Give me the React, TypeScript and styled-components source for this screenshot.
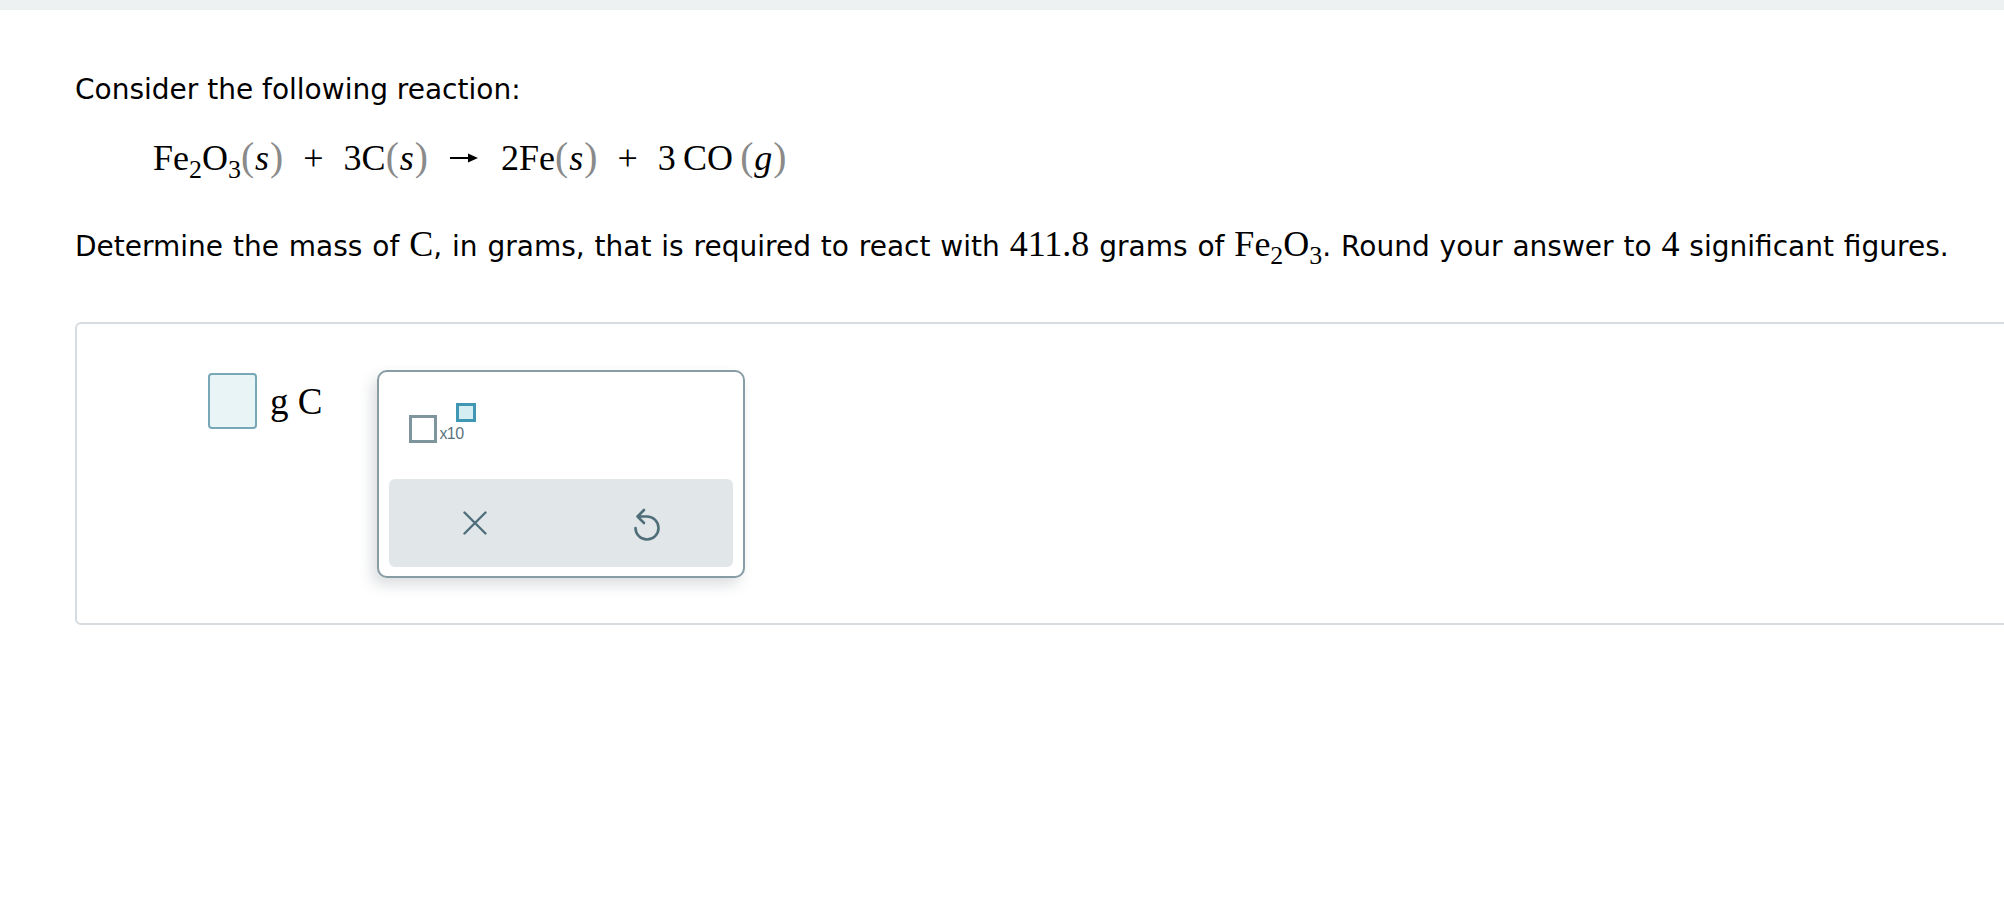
import React from "react";
import styled, { createGlobalStyle } from "styled-components";

const GlobalStyle = createGlobalStyle`
  html, body {
    margin: 0;
    padding: 0;
    background: #fff;
    overflow-x: hidden;
  }
  body {
    font-family: "DejaVu Sans", Verdana, sans-serif;
    color: #000;
  }
`;

const TopBar = styled.div`
  height: 10px;
  background: #eef1f2;
`;

const Page = styled.div`
  padding: 60px 0 0 75px;
`;

const Prompt = styled.p`
  margin: 0;
  font-size: 28px;
  line-height: 40px;
`;

const Equation = styled.div`
  margin: 22px 0 0 78px;
  font-family: "Liberation Serif", "Times New Roman", serif;
  font-size: 36px;
  line-height: 50px;
  height: 50px;
  display: flex;
  align-items: baseline;
`;

const Question = styled.p`
  margin: 45px 0 0;
  font-size: 28px;
  line-height: 40px;
  height: 40px;
  word-spacing: 1px;
  white-space: nowrap;
`;

const M = styled.span`
  font-family: "Liberation Serif", "Times New Roman", serif;
  font-size: 36px;
  line-height: 0;
  word-spacing: 0;
`;

const Sub = styled.sub`
  font-size: 0.72em;
  line-height: 0;
  vertical-align: -0.32em;
`;

const Paren = styled.span`
  color: #8a8a8a;
  font-size: 1.1em;
`;

const State = styled.i`
  font-style: italic;
  padding: 0 1px;
`;

const Op = styled.span`
  margin: 0 20px;
`;

const Arrow = styled.svg`
  margin: 0 22px 0 22px;
  align-self: center;
  position: relative;
  top: 1px;
`;

const AnswerPanel = styled.div`
  box-sizing: border-box;
  margin: 55px -60px 0 0;
  height: 303px;
  border: 2px solid #d5dbde;
  border-radius: 6px;
  display: flex;
  align-items: flex-start;
  padding: 46px 0 0 131px;
`;

const InputGroup = styled.div`
  display: flex;
  align-items: flex-start;
  padding-top: 3px;
`;

const AnswerInput = styled.div`
  width: 45px;
  height: 52px;
  border: 2px solid #78a7b7;
  border-radius: 4px;
  background: #e9f4f7;
`;

const Unit = styled.span`
  font-family: "Liberation Serif", "Times New Roman", serif;
  font-size: 37px;
  line-height: 40px;
  margin: 9px 0 0 13px;
`;

const Palette = styled.div`
  box-sizing: border-box;
  margin-left: 55px;
  width: 368px;
  height: 208px;
  border: 2px solid #879ca5;
  border-radius: 10px;
  background: #fff;
  box-shadow: -5px 7px 14px rgba(40, 60, 70, 0.17);
  padding: 0 10px 9px;
  display: flex;
  flex-direction: column;
`;

const TemplateRow = styled.div`
  height: 107px;
  flex: none;
  display: flex;
  align-items: flex-start;
  padding: 31px 0 0 20px;
  box-sizing: border-box;
`;

const BaseBox = styled.span`
  width: 22px;
  height: 22px;
  margin-top: 12px;
  border: 3px solid #7f959e;
`;

const TimesTen = styled.span`
  font-family: "Liberation Sans", Arial, sans-serif;
  font-size: 16px;
  letter-spacing: -0.6px;
  line-height: 16px;
  color: #5b7480;
  margin: 23px 0 0 2px;
`;

const ExpBox = styled.span`
  width: 14px;
  height: 13px;
  margin-left: -7px;
  border: 3px solid #3f97b3;
  background: #d5eef4;
`;

const ButtonBar = styled.div`
  flex: 1;
  display: grid;
  grid-template-columns: 1fr 1fr;
  background: #e1e6e9;
  border-radius: 6px;
`;

const IconButton = styled.div`
  display: flex;
  align-items: center;
  justify-content: center;
`;

const iconColor = "#4f6e7a";

const Phase = ({ s }: { s: string }) => (
  <>
    <Paren>(</Paren>
    <State>{s}</State>
    <Paren>)</Paren>
  </>
);

const App: React.FC = () => {
  return (
    <>
      <GlobalStyle />
      <TopBar />
      <Page>
        <Prompt>Consider the following reaction:</Prompt>
        <Equation>
          <span>
            Fe<Sub>2</Sub>O<Sub>3</Sub>
          </span>
          <Phase s="s" />
          <Op>+</Op>
          <span>3C</span>
          <Phase s="s" />
          <Arrow width="29" height="12" viewBox="0 0 29 12">
            <line x1="0" y1="6" x2="21" y2="6" stroke="#000" strokeWidth="2" />
            <path d="M18 1.5 L28 6 L18 10.5 Z" fill="#000" />
          </Arrow>
          <span>2Fe</span>
          <Phase s="s" />
          <Op>+</Op>
          <span>3&thinsp;CO&thinsp;</span>
          <Phase s="g" />
        </Equation>
        <Question>
          Determine the mass of <M>C</M>, in grams, that is required to react
          with <M>411.8</M> grams of{" "}
          <M>
            Fe<Sub>2</Sub>O<Sub>3</Sub>
          </M>
          . Round your answer to <M>4</M> significant figures.
        </Question>
        <AnswerPanel>
          <InputGroup>
            <AnswerInput />
            <Unit>g C</Unit>
          </InputGroup>
          <Palette>
            <TemplateRow>
              <BaseBox />
              <TimesTen>x10</TimesTen>
              <ExpBox />
            </TemplateRow>
            <ButtonBar>
              <IconButton>
                <svg width="24" height="24" viewBox="0 0 24 24">
                  <path
                    d="M1.5 1.5 L22.5 22.5 M22.5 1.5 L1.5 22.5"
                    stroke={iconColor}
                    strokeWidth="2.4"
                    strokeLinecap="round"
                    fill="none"
                  />
                </svg>
              </IconButton>
              <IconButton>
                <svg width="30" height="36" viewBox="0 0 30 36">
                  <path
                    d="M3.5 23 A11.5 11.5 0 1 0 15 11.5 L5.5 11.5 M12 5 L5.5 11.5 L12 18"
                    stroke={iconColor}
                    strokeWidth="2.6"
                    strokeLinecap="round"
                    strokeLinejoin="round"
                    fill="none"
                  />
                </svg>
              </IconButton>
            </ButtonBar>
          </Palette>
        </AnswerPanel>
      </Page>
    </>
  );
};

export default App;
